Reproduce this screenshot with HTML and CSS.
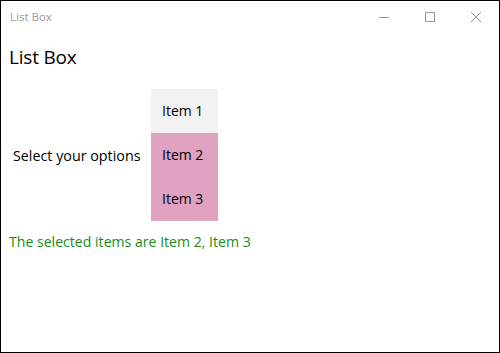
FILE: index.html
```html
<!DOCTYPE html>
<html lang="en">
<head>
    <meta charset="UTF-8">
    <title>List Box</title>
    <link rel="stylesheet" href="styles.css">
</head>
<body>
    <div class="window">
        <!-- Title bar -->
        <div class="titlebar">
            <span class="title">List Box</span>
            <div class="controls">
                <span class="ctrl">
                    <svg width="10" height="10" viewBox="0 0 10 10"><path d="M0 5.5H10" stroke="#999" stroke-width="1"/></svg>
                </span>
                <span class="ctrl">
                    <svg width="10" height="10" viewBox="0 0 10 10"><rect x="0.5" y="0.5" width="9" height="9" fill="none" stroke="#999" stroke-width="1"/></svg>
                </span>
                <span class="ctrl">
                    <svg width="10" height="10" viewBox="0 0 10 10"><path d="M0 0L10 10M10 0L0 10" stroke="#999" stroke-width="1"/></svg>
                </span>
            </div>
        </div>

        <div class="content">
            <h1>List Box</h1>

            <div class="row">
                <label class="label">Select your options</label>
                <ul class="listbox">
                    <li class="item">Item 1</li>
                    <li class="item selected">Item 2</li>
                    <li class="item selected">Item 3</li>
                </ul>
            </div>

            <p class="result">The selected items are Item 2, Item 3</p>
        </div>
    </div>
</body>
</html>
```

FILE: styles.css
```css
/* Basic styling */
html, body {
    margin: 0;
    padding: 0;
    height: 100%;
}

body {
    font-family: "Open Sans", "Noto Sans", sans-serif;
    background-color: white;
}

.window {
    box-sizing: border-box;
    height: 353px;
    border: 1px solid #000;
    background-color: white;
}

/* Title bar */
.titlebar {
    display: flex;
    align-items: center;
    justify-content: space-between;
    height: 31px;
}

.title {
    font-size: 11.5px;
    color: #999;
    padding-left: 9px;
}

.controls {
    display: flex;
    height: 100%;
}

.ctrl {
    display: flex;
    align-items: center;
    justify-content: center;
    width: 46px;
    height: 100%;
}

/* Main content */
.content {
    padding: 0 8px;
}

h1 {
    font-size: 19px;
    font-weight: normal;
    color: #000;
    margin: 12px 0 0;
    letter-spacing: -0.2px;
}

.row {
    display: flex;
    align-items: center;
    margin-top: 19px;
}

.label {
    font-size: 14.3px;
    color: #000;
    padding-left: 4px;
    width: 138px;
}

.listbox {
    list-style: none;
    margin: 0;
    padding: 0;
    width: 67px;
}

.item {
    box-sizing: border-box;
    height: 44px;
    line-height: 44px;
    padding-left: 11px;
    font-size: 14px;
    color: #000;
    background-color: #f2f2f2;
}

.item.selected {
    background-color: #e1a1c1;
}

/* Result styling */
.result {
    font-size: 14.1px;
    color: #1a8c1a;
    margin: 11px 0 0;
}
```
